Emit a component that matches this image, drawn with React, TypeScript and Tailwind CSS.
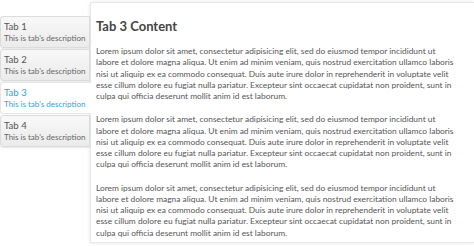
const lorem =
  'Lorem ipsum dolor sit amet, consectetur adipisicing elit, sed do eiusmod tempor incididunt ut labore et dolore magna aliqua. Ut enim ad minim veniam, quis nostrud exercitation ullamco laboris nisi ut aliquip ex ea commodo consequat. Duis aute irure dolor in reprehenderit in voluptate velit esse cillum dolore eu fugiat nulla pariatur. Excepteur sint occaecat cupidatat non proident, sunt in culpa qui officia deserunt mollit anim id est laborum.'

const tabs = ['Tab 1', 'Tab 2', 'Tab 3', 'Tab 4']

export default function App() {
  const active = 2
  return (
    <div
      className="flex h-[246px] w-[474px] overflow-hidden bg-white pt-[2px]"
      style={{ fontFamily: 'Lato, "Open Sans", sans-serif' }}
    >
      {/* tab list */}
      <div className="z-10 flex w-[91px] shrink-0 flex-col gap-[1px] pt-[14px]">
        {tabs.map((t, i) =>
          i === active ? (
            <div
              key={t}
              className="h-[32px] rounded-l-[3px] border border-r-0 border-[#e6e6e6] bg-white pl-[3px] pt-[4px] text-[#2ba6de]"
            >
              <div className="text-[9.6px] leading-[12px]">{t}</div>
              <div className="whitespace-nowrap text-[8px] leading-[11px]">This is tab's description</div>
            </div>
          ) : (
            <div
              key={t}
              className="mr-[1px] h-[32px] rounded-l-[3px] border border-[#dcdcdc] bg-gradient-to-b from-[#f8f8f8] to-[#ebebeb] pl-[3px] pt-[4px] text-[#555] shadow-[0_1px_2px_rgba(0,0,0,0.1)]"
            >
              <div className="text-[9.6px] leading-[12px]">{t}</div>
              <div className="whitespace-nowrap text-[8px] leading-[11px] text-[#666]">This is tab's description</div>
            </div>
          )
        )}
      </div>

      {/* content panel */}
      <div className="-ml-[1px] h-[241px] flex-1 rounded-tl-[3px] border border-r-0 border-[#e8e8e8] bg-white pl-[5px] pt-[14px] shadow-[0_0_4px_rgba(0,0,0,0.1)]">
        <h2 className="text-[13px] font-bold leading-[18px] text-[#444]">Tab 3 Content</h2>
        <div className="mt-[11px] w-[362px] space-y-[12px] text-[8.4px] leading-[11.25px] text-[#555]">
          <p>{lorem}</p>
          <p>{lorem}</p>
          <p>{lorem}</p>
        </div>
      </div>
    </div>
  )
}
